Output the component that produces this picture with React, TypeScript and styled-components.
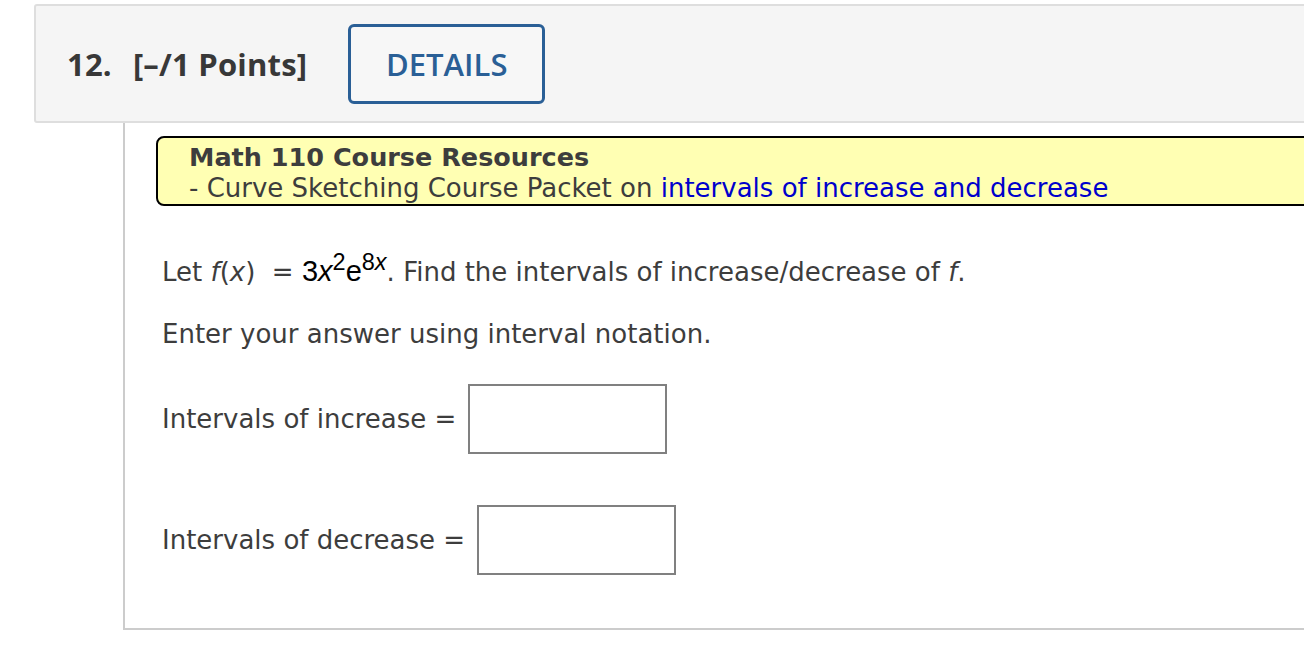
import styled, { createGlobalStyle } from "styled-components";

const GlobalStyle = createGlobalStyle`
    html, body {
        margin: 0;
        padding: 0;
        background: #ffffff;
        overflow: hidden;
    }
`;

export default function App() {
    return (
        <>
            <GlobalStyle />
            <Page>
                <QuestionHeader>
                    <PointsLabel>
                        <QuestionNumber>12.</QuestionNumber>
                        [–/1 Points]
                    </PointsLabel>
                    <DetailsButton>DETAILS</DetailsButton>
                </QuestionHeader>

                <QuestionBody>
                    <ResourceBox>
                        <ResourceTitle>Math 110 Course Resources</ResourceTitle>
                        <ResourceLine>
                            - Curve Sketching Course Packet on{" "}
                            <ResourceLink href="#">intervals of increase and decrease</ResourceLink>
                        </ResourceLine>
                    </ResourceBox>

                    <Prompt $top={50}>
                        Let <i>f</i>(<i>x</i>) &nbsp;= <MathText>
                            3<i>x</i>
                            <sup>2</sup>e<sup>8<i>x</i></sup>
                        </MathText>
                        . Find the intervals of increase/decrease of <i>f</i>.
                    </Prompt>

                    <Prompt $top={32}>Enter your answer using interval notation.</Prompt>

                    <AnswerRow $top={35}>
                        <AnswerLabel>Intervals of increase =</AnswerLabel>
                        <AnswerInput type="text" />
                    </AnswerRow>

                    <AnswerRow $top={51}>
                        <AnswerLabel>Intervals of decrease =</AnswerLabel>
                        <AnswerInput type="text" />
                    </AnswerRow>
                </QuestionBody>
            </Page>
        </>
    );
}

const Page = styled.div`
    padding: 4px 0 0 34px;
    width: 1304px;
    box-sizing: border-box;
`;

const QuestionHeader = styled.div`
    display: flex;
    align-items: center;
    gap: 41px;
    height: 119px;
    box-sizing: border-box;
    padding-left: 31px;
    margin-right: -20px;
    background: #f5f5f5;
    border: 2px solid #dedede;
    border-radius: 3px;
`;

const PointsLabel = styled.span`
    font-family: "Open Sans", "Liberation Sans", sans-serif;
    font-weight: 700;
    font-size: 31px;
    color: #383838;
    letter-spacing: 0.2px;
`;

const QuestionNumber = styled.span`
    margin-right: 21px;
`;

const DetailsButton = styled.button`
    width: 197px;
    height: 80px;
    box-sizing: border-box;
    background: #f7f7f7;
    border: 3px solid #2a5f96;
    border-radius: 6px;
    font-family: "Open Sans", "Liberation Sans", sans-serif;
    font-weight: 600;
    font-size: 31px;
    color: #2a5f96;
    padding: 0;
    margin-top: 1px;
`;

const QuestionBody = styled.div`
    margin-left: 89px;
    margin-right: -20px;
    padding: 13px 0 53px 31px;
    border-left: 2px solid #cccccc;
    border-bottom: 2px solid #cccccc;
`;

const ResourceBox = styled.div`
    background: #ffffb3;
    border: 2px solid #000000;
    border-radius: 8px;
    padding: 4px 0 0 31px;
    font-family: "DejaVu Sans", Verdana, sans-serif;
    font-size: 26px;
    color: #3d3d3d;
    line-height: 31px;
`;

const ResourceTitle = styled.div`
    font-weight: 700;
    font-size: 25.5px;
`;

const ResourceLine = styled.div``;

const ResourceLink = styled.a`
    color: #0000cc;
    text-decoration: none;
`;

const Prompt = styled.p<{ $top: number }>`
    margin: ${(p) => p.$top}px 0 0 6px;
    font-family: "DejaVu Sans", Verdana, sans-serif;
    font-size: 26px;
    line-height: 30px;
    color: #3d3d3d;
`;

const MathText = styled.span`
    font-family: "Liberation Sans", Arial, sans-serif;
    font-size: 29px;
    color: #000000;
    sup {
        font-size: 23.5px;
        line-height: 0;
        vertical-align: 11px;
    }
`;

const AnswerRow = styled.div<{ $top: number }>`
    display: flex;
    align-items: center;
    gap: 12px;
    margin: ${(p) => p.$top}px 0 0 6px;
`;

const AnswerLabel = styled.span`
    font-family: "DejaVu Sans", Verdana, sans-serif;
    font-size: 26px;
    color: #3d3d3d;
`;

const AnswerInput = styled.input`
    width: 199px;
    height: 70px;
    box-sizing: border-box;
    border: 2px solid #808080;
    background: #ffffff;
    margin: 0;
    padding: 0 6px;
`;
